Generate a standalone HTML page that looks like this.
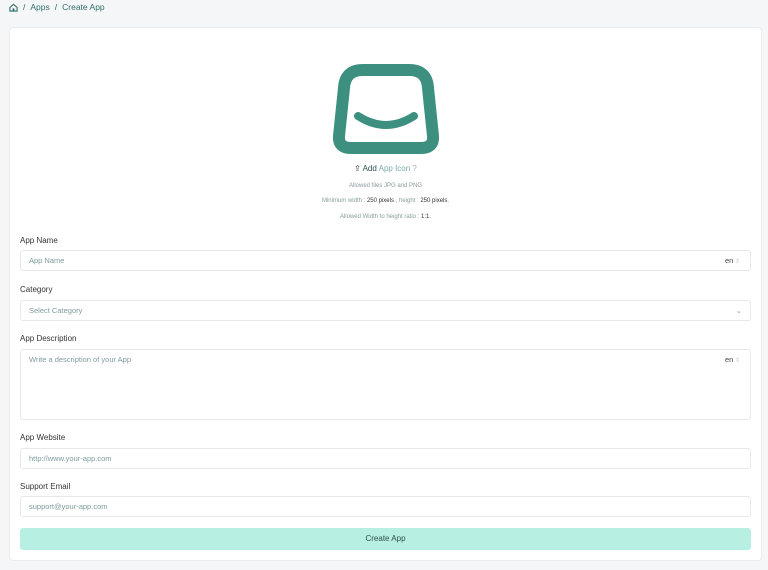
<!DOCTYPE html>
<html><head><style>
*{box-sizing:border-box;margin:0;padding:0}
body{width:768px;height:570px;background:#f5f6f7;font-family:"Liberation Sans",sans-serif;position:relative;overflow:hidden;color:#333}
.bc{position:absolute;left:9px;top:2px;font-size:8.5px;color:#2f6f6a;display:flex;align-items:center;gap:5px}
.card{position:absolute;left:9px;top:27px;width:753px;height:534px;background:#fff;border-radius:4px;border:1px solid #ececec}
.lbl{position:absolute;left:10px;font-size:8px;color:#333}
.inp{position:absolute;left:10px;width:731px;height:21px;border:1px solid #e6e8ea;border-radius:3px;font-size:7.5px;color:#7f9c9c;padding:0 8px;line-height:20px}
.en{position:absolute;right:10px;top:0;color:#444;font-size:7.5px}
.en:after{content:" ⇕";color:#ccc;font-size:6px}
.c{position:absolute;left:0;width:100%;text-align:center;font-size:6px;color:#8a9a9a}
.c b{font-weight:normal;color:#333}
</style></head><body>
<div class="bc"><svg width="9" height="9" viewBox="0 0 10 10"><path d="M1 5L5 1.5L9 5V9H1Z" fill="none" stroke="#2f6f6a" stroke-width="1.2"/><rect x="4" y="6" width="2" height="3" fill="#2f6f6a"/></svg><span>/</span><span>Apps</span><span>/</span><span>Create App</span></div>
<div class="card">
<svg style="position:absolute;left:323px;top:36px" width="108" height="90" viewBox="0 0 108 90"><path d="M30 6H76Q94 6 95 24L100 72Q101 84 88 84H18Q5 84 6 72L11 24Q12 6 30 6Z" fill="none" stroke="#3d9080" stroke-width="12"/><path d="M25 52Q53 70 81 52" fill="none" stroke="#3d9080" stroke-width="8" stroke-linecap="round"/></svg>
<div class="c" style="top:136px;font-size:8px;color:#333"><span style="color:#333">⇪</span> <span style="color:#2f4f4f">Add</span> <span style="color:#7aa">App Icon</span> <span style="color:#aaa">?</span></div>
<div class="c" style="top:155px">Allowed files JPG and PNG</div>
<div class="c" style="top:170px">Minimum width : <b>250 pixels</b> , height : <b>250 pixels</b>.</div>
<div class="c" style="top:186px">Allowed Width to height ratio : <b>1:1</b>.</div>
<div class="lbl" style="top:208px">App Name</div>
<div class="inp" style="top:222px">App Name<span class="en">en</span></div>
<div class="lbl" style="top:257px">Category</div>
<div class="inp" style="top:272px">Select Category<span style="position:absolute;right:8px;color:#999">⌄</span></div>
<div class="lbl" style="top:306px">App Description</div>
<div class="inp" style="top:321px;height:71px;line-height:20px">Write a description of your App<span class="en">en</span></div>
<div class="lbl" style="top:405px">App Website</div>
<div class="inp" style="top:420px">http://www.your-app.com</div>
<div class="lbl" style="top:454px">Support Email</div>
<div class="inp" style="top:468px">support@your-app.com</div>
<div style="position:absolute;left:10px;top:500px;width:731px;height:22px;background:#b7f0e2;border-radius:3px;text-align:center;line-height:22px;font-size:8px;color:#2f4f4f">Create App</div>
</div>
</body></html>
